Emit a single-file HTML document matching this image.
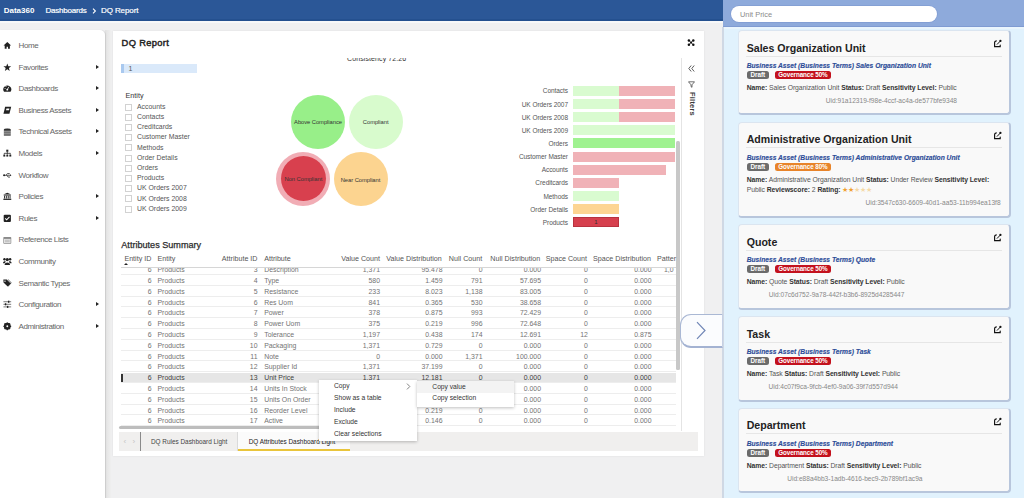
<!DOCTYPE html>
<html><head><meta charset="utf-8"><style>
*{box-sizing:border-box;margin:0;padding:0}
html,body{width:1024px;height:498px;overflow:hidden;background:#f0f0f1;font-family:"Liberation Sans",sans-serif;position:relative}
.a{position:absolute;white-space:nowrap}
.t{position:absolute;white-space:nowrap;height:12px;line-height:12px}
svg{display:block}
</style></head><body>
<div class="a" style="left:0px;top:0px;width:723px;height:21px;background:#2b5797;"></div>
<div class="a" style="left:0px;top:19px;width:723px;height:2px;background:#24508f;"></div>
<div class="a" style="left:0px;top:21px;width:723px;height:2px;background:#f7f8f9;"></div>
<div class="t" style="left:3.7px;top:5.20px;font-size:8px;color:#fff;font-weight:bold;font-style:normal;letter-spacing:0px;">Data360</div>
<div class="t" style="left:45.4px;top:5.20px;font-size:8px;color:#fff;font-weight:normal;font-style:normal;letter-spacing:-0.2px;-webkit-text-stroke:0.2px #fff">Dashboards</div>
<svg class="a" style="left:92px;top:7.6px" width="5" height="6" viewBox="0 0 5 6"><path d="M1 0.6 L3.4 3 L1 5.4" stroke="#fff" stroke-width="1.1" fill="none"/></svg>
<div class="t" style="left:101px;top:5.20px;font-size:8px;color:#fff;font-weight:normal;font-style:normal;letter-spacing:-0.1px;-webkit-text-stroke:0.2px #fff">DQ Report</div>
<div class="a" style="left:105px;top:30px;width:6px;height:468px;background:linear-gradient(to right,#e2e2e2,#efefef);"></div>
<div class="a" style="left:0px;top:30px;width:105px;height:468px;background:#fff;border-top-right-radius:5px;box-shadow:1px 0 1px rgba(0,0,0,.10)"></div>
<svg class="a" style="left:3.4px;top:41.2px" width="8.6" height="8.6" viewBox="0 0 10 10"><path d="M5 1.2 L0.6 5.2 H2 V9 H4.2 V6.6 H5.8 V9 H8 V5.2 H9.4 Z" fill="#222"/></svg>
<div class="t" style="left:18.5px;top:39.90px;font-size:8px;color:#666;font-weight:normal;font-style:normal;letter-spacing:-0.38px;">Home</div>
<svg class="a" style="left:3.4px;top:62.8px" width="8.6" height="8.6" viewBox="0 0 10 10"><path d="M5 0.6 L6.2 3.7 L9.5 3.8 L6.9 5.9 L7.8 9.2 L5 7.3 L2.2 9.2 L3.1 5.9 L0.5 3.8 L3.8 3.7 Z" fill="#222"/></svg>
<div class="t" style="left:18.5px;top:61.50px;font-size:8px;color:#666;font-weight:normal;font-style:normal;letter-spacing:-0.38px;">Favorites</div>
<div class="a" style="left:96px;top:64.6px;width:0;height:0;border-left:3px solid #222;border-top:2.5px solid transparent;border-bottom:2.5px solid transparent"></div>
<svg class="a" style="left:3.4px;top:84.4px" width="8.6" height="8.6" viewBox="0 0 10 10"><path d="M1.2 9 A4.6 4.6 0 1 1 8.8 9 Z" fill="#222"/><circle cx="5" cy="6.6" r="1.1" fill="#fff"/><path d="M5 6.6 L6.8 3.2" stroke="#fff" stroke-width="0.9"/><circle cx="2.4" cy="5.2" r="0.6" fill="#fff"/><circle cx="3.5" cy="3" r="0.6" fill="#fff"/></svg>
<div class="t" style="left:18.5px;top:83.10px;font-size:8px;color:#666;font-weight:normal;font-style:normal;letter-spacing:-0.38px;">Dashboards</div>
<div class="a" style="left:96px;top:86.2px;width:0;height:0;border-left:3px solid #222;border-top:2.5px solid transparent;border-bottom:2.5px solid transparent"></div>
<svg class="a" style="left:3.4px;top:106.0px" width="8.6" height="8.6" viewBox="0 0 10 10"><path d="M2.5 1 H9.5 L7.5 9 H0.5 Z" fill="#222"/><path d="M4 3 H7.5 L7 5 H3.5 Z" fill="#fff"/></svg>
<div class="t" style="left:18.5px;top:104.70px;font-size:8px;color:#666;font-weight:normal;font-style:normal;letter-spacing:-0.38px;">Business Assets</div>
<div class="a" style="left:96px;top:107.8px;width:0;height:0;border-left:3px solid #222;border-top:2.5px solid transparent;border-bottom:2.5px solid transparent"></div>
<svg class="a" style="left:3.4px;top:127.6px" width="8.6" height="8.6" viewBox="0 0 10 10"><ellipse cx="5" cy="2" rx="4" ry="1.4" fill="#222"/><rect x="1" y="2" width="8" height="7" fill="#555"/><path d="M1 4.5 H9 M1 6.8 H9" stroke="#fff" stroke-width="0.6"/></svg>
<div class="t" style="left:18.5px;top:126.30px;font-size:8px;color:#666;font-weight:normal;font-style:normal;letter-spacing:-0.38px;">Technical Assets</div>
<div class="a" style="left:96px;top:129.4px;width:0;height:0;border-left:3px solid #222;border-top:2.5px solid transparent;border-bottom:2.5px solid transparent"></div>
<svg class="a" style="left:3.4px;top:149.2px" width="8.6" height="8.6" viewBox="0 0 10 10"><rect x="3.8" y="0.8" width="2.4" height="2.4" fill="#222"/><path d="M5 3 V5 M1.5 5 H8.5 M1.5 5 V6.5 M5 5 V6.5 M8.5 5 V6.5" stroke="#222" stroke-width="0.9" fill="none"/><rect x="0.4" y="6.6" width="2.2" height="2.2" fill="#222"/><rect x="3.9" y="6.6" width="2.2" height="2.2" fill="#222"/><rect x="7.4" y="6.6" width="2.2" height="2.2" fill="#222"/></svg>
<div class="t" style="left:18.5px;top:147.90px;font-size:8px;color:#666;font-weight:normal;font-style:normal;letter-spacing:-0.38px;">Models</div>
<div class="a" style="left:96px;top:151.0px;width:0;height:0;border-left:3px solid #222;border-top:2.5px solid transparent;border-bottom:2.5px solid transparent"></div>
<svg class="a" style="left:3.4px;top:170.8px" width="8.6" height="8.6" viewBox="0 0 10 10"><circle cx="1.3" cy="5" r="1.2" fill="#222"/><path d="M1.5 5 H9 M3.5 5 L5 3 H6.5 M4.5 5 L5.8 7 H7" stroke="#222" stroke-width="0.8" fill="none"/><path d="M8.2 3.8 L9.8 5 L8.2 6.2 Z" fill="#222"/><rect x="6.3" y="2.4" width="1.3" height="1.3" fill="#222"/><circle cx="7.4" cy="7" r="0.7" fill="#222"/></svg>
<div class="t" style="left:18.5px;top:169.50px;font-size:8px;color:#666;font-weight:normal;font-style:normal;letter-spacing:-0.38px;">Workflow</div>
<svg class="a" style="left:3.4px;top:192.4px" width="8.6" height="8.6" viewBox="0 0 10 10"><path d="M5 0.8 L9.6 3 H0.4 Z" fill="#222"/><rect x="0.8" y="3.3" width="8.4" height="0.8" fill="#222"/><path d="M1.8 4.4 V7.6 M3.9 4.4 V7.6 M6.1 4.4 V7.6 M8.2 4.4 V7.6" stroke="#222" stroke-width="1.1"/><rect x="0.4" y="7.8" width="9.2" height="1.4" fill="#222"/></svg>
<div class="t" style="left:18.5px;top:191.10px;font-size:8px;color:#666;font-weight:normal;font-style:normal;letter-spacing:-0.38px;">Policies</div>
<div class="a" style="left:96px;top:194.2px;width:0;height:0;border-left:3px solid #222;border-top:2.5px solid transparent;border-bottom:2.5px solid transparent"></div>
<svg class="a" style="left:3.4px;top:214.0px" width="8.6" height="8.6" viewBox="0 0 10 10"><rect x="0.8" y="0.8" width="8.4" height="8.4" rx="1.2" fill="#222"/><path d="M2.6 5 L4.3 6.7 L7.5 3.3" stroke="#fff" stroke-width="1.2" fill="none"/></svg>
<div class="t" style="left:18.5px;top:212.70px;font-size:8px;color:#666;font-weight:normal;font-style:normal;letter-spacing:-0.38px;">Rules</div>
<div class="a" style="left:96px;top:215.8px;width:0;height:0;border-left:3px solid #222;border-top:2.5px solid transparent;border-bottom:2.5px solid transparent"></div>
<svg class="a" style="left:3.4px;top:235.6px" width="8.6" height="8.6" viewBox="0 0 10 10"><rect x="0.4" y="1.2" width="9.2" height="7.8" rx="0.8" fill="#8a8a8a"/><rect x="1.2" y="3.4" width="7.6" height="4.8" fill="#e8e8e8"/><path d="M2.2 4.9 H7.8 M2.2 6.7 H7.8" stroke="#999" stroke-width="0.7"/></svg>
<div class="t" style="left:18.5px;top:234.30px;font-size:8px;color:#666;font-weight:normal;font-style:normal;letter-spacing:-0.38px;">Reference Lists</div>
<svg class="a" style="left:3.4px;top:257.2px" width="8.6" height="8.6" viewBox="0 0 10 10"><circle cx="5" cy="3" r="1.9" fill="#222"/><path d="M1.8 9.2 C1.8 5.4 8.2 5.4 8.2 9.2 Z" fill="#222"/><circle cx="1.7" cy="2.6" r="1.4" fill="#222"/><circle cx="8.3" cy="2.6" r="1.4" fill="#222"/><path d="M0 7.4 C0 4.8 2.6 4.6 3.2 5.4 L2 7.4 Z M10 7.4 C10 4.8 7.4 4.6 6.8 5.4 L8 7.4 Z" fill="#222"/></svg>
<div class="t" style="left:18.5px;top:255.90px;font-size:8px;color:#666;font-weight:normal;font-style:normal;letter-spacing:-0.38px;">Community</div>
<svg class="a" style="left:3.4px;top:278.8px" width="8.6" height="8.6" viewBox="0 0 10 10"><path d="M0.4 0.6 H4.4 L9 5.2 L5.4 8.8 L0.6 4.2 Z" fill="#222"/><path d="M5.4 0.6 H6.2 L10 4.4 L6.2 8.6 L5.8 8.2 L9.2 4.4 Z" fill="#222"/><circle cx="2.3" cy="2.5" r="0.8" fill="#fff"/></svg>
<div class="t" style="left:18.5px;top:277.50px;font-size:8px;color:#666;font-weight:normal;font-style:normal;letter-spacing:-0.38px;">Semantic Types</div>
<svg class="a" style="left:3.4px;top:300.4px" width="8.6" height="8.6" viewBox="0 0 10 10"><path d="M0.5 2 H9.5 M0.5 5 H9.5 M0.5 8 H9.5" stroke="#222" stroke-width="0.7"/><rect x="5.8" y="0.8" width="1.6" height="2.4" fill="#222"/><rect x="2.2" y="3.8" width="1.6" height="2.4" fill="#222"/><rect x="4.6" y="6.8" width="1.6" height="2.4" fill="#222"/></svg>
<div class="t" style="left:18.5px;top:299.10px;font-size:8px;color:#666;font-weight:normal;font-style:normal;letter-spacing:-0.38px;">Configuration</div>
<div class="a" style="left:96px;top:302.2px;width:0;height:0;border-left:3px solid #222;border-top:2.5px solid transparent;border-bottom:2.5px solid transparent"></div>
<svg class="a" style="left:3.4px;top:322.0px" width="8.6" height="8.6" viewBox="0 0 10 10"><circle cx="5" cy="5" r="3" fill="none" stroke="#222" stroke-width="2"/><path d="M5 0.5 V9.5 M0.5 5 H9.5 M1.8 1.8 L8.2 8.2 M8.2 1.8 L1.8 8.2" stroke="#222" stroke-width="1.4"/><circle cx="5" cy="5" r="2.8" fill="#222"/><circle cx="5" cy="5" r="1.1" fill="#fff"/></svg>
<div class="t" style="left:18.5px;top:320.70px;font-size:8px;color:#666;font-weight:normal;font-style:normal;letter-spacing:-0.38px;">Administration</div>
<div class="a" style="left:96px;top:323.8px;width:0;height:0;border-left:3px solid #222;border-top:2.5px solid transparent;border-bottom:2.5px solid transparent"></div>
<div class="a" style="left:113px;top:30.5px;width:591px;height:425.5px;background:#fff;box-shadow:0 0 2px rgba(0,0,0,.08)"></div>
<div class="t" style="left:121.6px;top:36.90px;font-size:9.3px;color:#252423;font-weight:normal;font-style:normal;letter-spacing:0.35px;-webkit-text-stroke:0.45px #252423">DQ Report</div>
<svg class="a" style="left:686px;top:38px" width="10" height="10" viewBox="0 0 10 10"><path d="M3 2.5 L7 6.6 M7 2.5 L3 6.6" stroke="#111" stroke-width="0.8"/><circle cx="2.9" cy="2.4" r="1.25" fill="#111"/><circle cx="7.3" cy="2.4" r="1.25" fill="#111"/><circle cx="2.9" cy="6.7" r="1.25" fill="#111"/><circle cx="7.3" cy="6.7" r="1.25" fill="#111"/><circle cx="5.1" cy="4.5" r="1" fill="#111"/></svg>
<div class="a" style="left:121px;top:64.2px;width:76px;height:8.5px;background:#dae9fa;border-left:3px solid #a9c9ef"></div>
<div class="t" style="left:128.6px;top:63.20px;font-size:7px;color:#555;font-weight:normal;font-style:normal;letter-spacing:0px;">1</div>
<div class="a" style="left:340px;top:57.6px;width:80px;height:6px;overflow:hidden"><div class="t" style="left:7px;top:-4.9px;font-size:7px;color:#333;letter-spacing:0.1px">Consistency 72.26</div></div>
<div class="t" style="left:125.5px;top:89.80px;font-size:7.2px;color:#333;font-weight:normal;font-style:normal;letter-spacing:0px;">Entity</div>
<div class="a" style="left:125px;top:103.5px;width:7px;height:7px;background:#fff;border:1px solid #d2d2d2"></div>
<div class="t" style="left:137px;top:100.80px;font-size:6.9px;color:#555;font-weight:normal;font-style:normal;letter-spacing:0px;">Accounts</div>
<div class="a" style="left:125px;top:113.7px;width:7px;height:7px;background:#fff;border:1px solid #d2d2d2"></div>
<div class="t" style="left:137px;top:111.00px;font-size:6.9px;color:#555;font-weight:normal;font-style:normal;letter-spacing:0px;">Contacts</div>
<div class="a" style="left:125px;top:123.89999999999999px;width:7px;height:7px;background:#fff;border:1px solid #d2d2d2"></div>
<div class="t" style="left:137px;top:121.20px;font-size:6.9px;color:#555;font-weight:normal;font-style:normal;letter-spacing:0px;">Creditcards</div>
<div class="a" style="left:125px;top:134.1px;width:7px;height:7px;background:#fff;border:1px solid #d2d2d2"></div>
<div class="t" style="left:137px;top:131.40px;font-size:6.9px;color:#555;font-weight:normal;font-style:normal;letter-spacing:0px;">Customer Master</div>
<div class="a" style="left:125px;top:144.29999999999998px;width:7px;height:7px;background:#fff;border:1px solid #d2d2d2"></div>
<div class="t" style="left:137px;top:141.60px;font-size:6.9px;color:#555;font-weight:normal;font-style:normal;letter-spacing:0px;">Methods</div>
<div class="a" style="left:125px;top:154.5px;width:7px;height:7px;background:#fff;border:1px solid #d2d2d2"></div>
<div class="t" style="left:137px;top:151.80px;font-size:6.9px;color:#555;font-weight:normal;font-style:normal;letter-spacing:0px;">Order Details</div>
<div class="a" style="left:125px;top:164.7px;width:7px;height:7px;background:#fff;border:1px solid #d2d2d2"></div>
<div class="t" style="left:137px;top:162.00px;font-size:6.9px;color:#555;font-weight:normal;font-style:normal;letter-spacing:0px;">Orders</div>
<div class="a" style="left:125px;top:174.89999999999998px;width:7px;height:7px;background:#fff;border:1px solid #d2d2d2"></div>
<div class="t" style="left:137px;top:172.20px;font-size:6.9px;color:#555;font-weight:normal;font-style:normal;letter-spacing:0px;">Products</div>
<div class="a" style="left:125px;top:185.09999999999997px;width:7px;height:7px;background:#fff;border:1px solid #d2d2d2"></div>
<div class="t" style="left:137px;top:182.40px;font-size:6.9px;color:#555;font-weight:normal;font-style:normal;letter-spacing:0px;">UK Orders 2007</div>
<div class="a" style="left:125px;top:195.29999999999998px;width:7px;height:7px;background:#fff;border:1px solid #d2d2d2"></div>
<div class="t" style="left:137px;top:192.60px;font-size:6.9px;color:#555;font-weight:normal;font-style:normal;letter-spacing:0px;">UK Orders 2008</div>
<div class="a" style="left:125px;top:205.5px;width:7px;height:7px;background:#fff;border:1px solid #d2d2d2"></div>
<div class="t" style="left:137px;top:202.80px;font-size:6.9px;color:#555;font-weight:normal;font-style:normal;letter-spacing:0px;">UK Orders 2009</div>
<div class="a" style="left:291px;top:94.7px;width:54px;height:54px;border-radius:50%;background:#98ef89"></div>
<div class="t" style="left:218px;width:200px;text-align:center;top:116.20px;font-size:5.8px;color:#333;font-weight:normal;font-style:normal;letter-spacing:-0.05px;">Above Compliance</div>
<div class="a" style="left:348.7px;top:94.7px;width:54px;height:54px;border-radius:50%;background:#d8fbcd"></div>
<div class="t" style="left:275.7px;width:200px;text-align:center;top:116.20px;font-size:5.8px;color:#333;font-weight:normal;font-style:normal;letter-spacing:-0.05px;">Compliant</div>
<div class="a" style="left:276.4px;top:151.8px;width:54px;height:54px;border-radius:50%;background:#f1adb5"></div>
<div class="a" style="left:280.9px;top:156.3px;width:45.0px;height:45.0px;border-radius:50%;background:#d8404e"></div>
<div class="t" style="left:203.39999999999998px;width:200px;text-align:center;top:173.30px;font-size:5.8px;color:#333;font-weight:normal;font-style:normal;letter-spacing:-0.05px;">Non Compliant</div>
<div class="a" style="left:333.5px;top:152px;width:54px;height:54px;border-radius:50%;background:#fcd490"></div>
<div class="t" style="left:260.5px;width:200px;text-align:center;top:173.50px;font-size:5.8px;color:#333;font-weight:normal;font-style:normal;letter-spacing:-0.05px;">Near Compliant</div>
<div class="t" style="right:456px;top:85.40px;font-size:6.5px;color:#555;font-weight:normal;font-style:normal;letter-spacing:-0.05px;">Contacts</div>
<div class="a" style="left:572.7px;top:85.8px;width:46.3px;height:10px;background:#d9fbd0;"></div>
<div class="a" style="left:619.0px;top:85.8px;width:56px;height:10px;background:#f0b2b7;"></div>
<div class="t" style="right:456px;top:98.55px;font-size:6.5px;color:#555;font-weight:normal;font-style:normal;letter-spacing:-0.05px;">UK Orders 2007</div>
<div class="a" style="left:572.7px;top:99.0px;width:46.3px;height:10px;background:#d9fbd0;"></div>
<div class="a" style="left:619.0px;top:99.0px;width:56px;height:10px;background:#f0b2b7;"></div>
<div class="t" style="right:456px;top:111.70px;font-size:6.5px;color:#555;font-weight:normal;font-style:normal;letter-spacing:-0.05px;">UK Orders 2008</div>
<div class="a" style="left:572.7px;top:112.1px;width:46.3px;height:10px;background:#d9fbd0;"></div>
<div class="a" style="left:619.0px;top:112.1px;width:56px;height:10px;background:#f0b2b7;"></div>
<div class="t" style="right:456px;top:124.85px;font-size:6.5px;color:#555;font-weight:normal;font-style:normal;letter-spacing:-0.05px;">UK Orders 2009</div>
<div class="a" style="left:572.7px;top:125.2px;width:102.3px;height:10px;background:#d9fbd0;"></div>
<div class="t" style="right:456px;top:138.00px;font-size:6.5px;color:#555;font-weight:normal;font-style:normal;letter-spacing:-0.05px;">Orders</div>
<div class="a" style="left:572.7px;top:138.4px;width:102.3px;height:10px;background:#9ff290;"></div>
<div class="t" style="right:456px;top:151.15px;font-size:6.5px;color:#555;font-weight:normal;font-style:normal;letter-spacing:-0.05px;">Customer Master</div>
<div class="a" style="left:572.7px;top:151.6px;width:102.3px;height:10px;background:#f0b2b7;"></div>
<div class="t" style="right:456px;top:164.30px;font-size:6.5px;color:#555;font-weight:normal;font-style:normal;letter-spacing:-0.05px;">Accounts</div>
<div class="a" style="left:572.7px;top:164.7px;width:93px;height:10px;background:#f0b2b7;"></div>
<div class="t" style="right:456px;top:177.45px;font-size:6.5px;color:#555;font-weight:normal;font-style:normal;letter-spacing:-0.05px;">Creditcards</div>
<div class="a" style="left:572.7px;top:177.8px;width:46.3px;height:10px;background:#f0b2b7;"></div>
<div class="t" style="right:456px;top:190.60px;font-size:6.5px;color:#555;font-weight:normal;font-style:normal;letter-spacing:-0.05px;">Methods</div>
<div class="a" style="left:572.7px;top:191.0px;width:46.3px;height:10px;background:#d9fbd0;"></div>
<div class="t" style="right:456px;top:203.75px;font-size:6.5px;color:#555;font-weight:normal;font-style:normal;letter-spacing:-0.05px;">Order Details</div>
<div class="a" style="left:572.7px;top:204.2px;width:46.3px;height:10px;background:#fdd593;"></div>
<div class="t" style="right:456px;top:216.90px;font-size:6.5px;color:#555;font-weight:normal;font-style:normal;letter-spacing:-0.05px;">Products</div>
<div class="a" style="left:572.7px;top:217.3px;width:46.3px;height:10px;background:#d6404e;border:1px solid #b8323f"></div>
<div class="t" style="left:496px;width:200px;text-align:center;top:215.70px;font-size:6px;color:#333;font-weight:normal;font-style:normal;letter-spacing:0px;">1</div>
<div class="a" style="left:681px;top:58px;width:1px;height:373px;background:#e4e4e4;"></div>
<div class="a" style="left:676.3px;top:140.5px;width:3.5px;height:229px;background:#c8c8c8;border-radius:1.5px"></div>
<svg class="a" style="left:688px;top:65px" width="7" height="7" viewBox="0 0 7 7"><path d="M3.2 0.5 L0.8 3.5 L3.2 6.5 M6.2 0.5 L3.8 3.5 L6.2 6.5" stroke="#333" stroke-width="0.8" fill="none"/></svg>
<svg class="a" style="left:688px;top:81px" width="7" height="7" viewBox="0 0 7 7"><path d="M0.5 0.8 H6.5 L4 3.8 V6.3 L3 5.6 V3.8 Z" stroke="#333" stroke-width="0.7" fill="none"/></svg>
<div class="t" style="left:680px;top:97.8px;width:24px;text-align:center;font-size:7.5px;font-weight:bold;color:#3a3a3a;transform:rotate(90deg);letter-spacing:0.2px">Filters</div>
<div class="t" style="left:121.3px;top:239.40px;font-size:9.1px;color:#2b2b2b;font-weight:normal;font-style:normal;letter-spacing:0px;-webkit-text-stroke:0.25px #2b2b2b">Attributes Summary</div>
<div class="t" style="left:124.4px;top:252.90px;font-size:7.15px;color:#555;font-weight:normal;font-style:normal;letter-spacing:0px;">Entity ID</div>
<div class="t" style="left:157.5px;top:252.90px;font-size:7.15px;color:#555;font-weight:normal;font-style:normal;letter-spacing:0px;">Entity</div>
<div class="t" style="right:766.5px;top:252.90px;font-size:7.15px;color:#555;font-weight:normal;font-style:normal;letter-spacing:0px;">Attribute ID</div>
<div class="t" style="left:264.2px;top:252.90px;font-size:7.15px;color:#555;font-weight:normal;font-style:normal;letter-spacing:0px;">Attribute</div>
<div class="t" style="right:644px;top:252.90px;font-size:7.15px;color:#555;font-weight:normal;font-style:normal;letter-spacing:0px;">Value Count</div>
<div class="t" style="right:582.3px;top:252.90px;font-size:7.15px;color:#555;font-weight:normal;font-style:normal;letter-spacing:0px;">Value Distribution</div>
<div class="t" style="right:541.8px;top:252.90px;font-size:7.15px;color:#555;font-weight:normal;font-style:normal;letter-spacing:0px;">Null Count</div>
<div class="t" style="right:483.70000000000005px;top:252.90px;font-size:7.15px;color:#555;font-weight:normal;font-style:normal;letter-spacing:0px;">Null Distribution</div>
<div class="t" style="right:437px;top:252.90px;font-size:7.15px;color:#555;font-weight:normal;font-style:normal;letter-spacing:0px;">Space Count</div>
<div class="t" style="right:373px;top:252.90px;font-size:7.15px;color:#555;font-weight:normal;font-style:normal;letter-spacing:0px;">Space Distribution</div>
<div class="t" style="left:657px;top:252.90px;font-size:7.15px;color:#555;font-weight:normal;font-style:normal;letter-spacing:0px;">Patter</div>
<div class="a" style="left:124.3px;top:263px;width:0;height:0;border-bottom:2.2px solid #222;border-left:2.4px solid transparent;border-right:2.4px solid transparent"></div>
<div class="a" style="left:113px;top:267px;width:563px;height:159px;overflow:hidden">
<div class="a" style="left:8px;top:6.9px;width:555px;height:1px;background:#ededed;"></div>
<div class="t" style="right:524.3px;top:-2.90px;font-size:6.9px;color:#737373">6</div>
<div class="t" style="left:44.5px;top:-2.90px;font-size:6.9px;color:#737373">Products</div>
<div class="t" style="right:418.5px;top:-2.90px;font-size:6.9px;color:#737373">3</div>
<div class="t" style="left:151.2px;top:-2.90px;font-size:6.9px;color:#737373">Description</div>
<div class="t" style="right:296.0px;top:-2.90px;font-size:6.9px;color:#737373">1,371</div>
<div class="t" style="right:233.5px;top:-2.90px;font-size:6.9px;color:#737373">95.478</div>
<div class="t" style="right:193.5px;top:-2.90px;font-size:6.9px;color:#737373">0</div>
<div class="t" style="right:135.0px;top:-2.90px;font-size:6.9px;color:#737373">0.000</div>
<div class="t" style="right:88.2px;top:-2.90px;font-size:6.9px;color:#737373">0</div>
<div class="t" style="right:24.5px;top:-2.90px;font-size:6.9px;color:#737373">0.000</div>
<div class="t" style="left:551.0px;top:-2.90px;font-size:6.9px;color:#737373">1,0</div>
<div class="a" style="left:8px;top:17.7px;width:555px;height:1px;background:#ededed;"></div>
<div class="t" style="right:524.3px;top:7.90px;font-size:6.9px;color:#737373">6</div>
<div class="t" style="left:44.5px;top:7.90px;font-size:6.9px;color:#737373">Products</div>
<div class="t" style="right:418.5px;top:7.90px;font-size:6.9px;color:#737373">4</div>
<div class="t" style="left:151.2px;top:7.90px;font-size:6.9px;color:#737373">Type</div>
<div class="t" style="right:296.0px;top:7.90px;font-size:6.9px;color:#737373">580</div>
<div class="t" style="right:233.5px;top:7.90px;font-size:6.9px;color:#737373">1.459</div>
<div class="t" style="right:193.5px;top:7.90px;font-size:6.9px;color:#737373">791</div>
<div class="t" style="right:135.0px;top:7.90px;font-size:6.9px;color:#737373">57.695</div>
<div class="t" style="right:88.2px;top:7.90px;font-size:6.9px;color:#737373">0</div>
<div class="t" style="right:24.5px;top:7.90px;font-size:6.9px;color:#737373">0.000</div>
<div class="a" style="left:8px;top:28.5px;width:555px;height:1px;background:#ededed;"></div>
<div class="t" style="right:524.3px;top:18.70px;font-size:6.9px;color:#737373">6</div>
<div class="t" style="left:44.5px;top:18.70px;font-size:6.9px;color:#737373">Products</div>
<div class="t" style="right:418.5px;top:18.70px;font-size:6.9px;color:#737373">5</div>
<div class="t" style="left:151.2px;top:18.70px;font-size:6.9px;color:#737373">Resistance</div>
<div class="t" style="right:296.0px;top:18.70px;font-size:6.9px;color:#737373">233</div>
<div class="t" style="right:233.5px;top:18.70px;font-size:6.9px;color:#737373">8.023</div>
<div class="t" style="right:193.5px;top:18.70px;font-size:6.9px;color:#737373">1,138</div>
<div class="t" style="right:135.0px;top:18.70px;font-size:6.9px;color:#737373">83.005</div>
<div class="t" style="right:88.2px;top:18.70px;font-size:6.9px;color:#737373">0</div>
<div class="t" style="right:24.5px;top:18.70px;font-size:6.9px;color:#737373">0.000</div>
<div class="a" style="left:8px;top:39.3px;width:555px;height:1px;background:#ededed;"></div>
<div class="t" style="right:524.3px;top:29.50px;font-size:6.9px;color:#737373">6</div>
<div class="t" style="left:44.5px;top:29.50px;font-size:6.9px;color:#737373">Products</div>
<div class="t" style="right:418.5px;top:29.50px;font-size:6.9px;color:#737373">6</div>
<div class="t" style="left:151.2px;top:29.50px;font-size:6.9px;color:#737373">Res Uom</div>
<div class="t" style="right:296.0px;top:29.50px;font-size:6.9px;color:#737373">841</div>
<div class="t" style="right:233.5px;top:29.50px;font-size:6.9px;color:#737373">0.365</div>
<div class="t" style="right:193.5px;top:29.50px;font-size:6.9px;color:#737373">530</div>
<div class="t" style="right:135.0px;top:29.50px;font-size:6.9px;color:#737373">38.658</div>
<div class="t" style="right:88.2px;top:29.50px;font-size:6.9px;color:#737373">0</div>
<div class="t" style="right:24.5px;top:29.50px;font-size:6.9px;color:#737373">0.000</div>
<div class="a" style="left:8px;top:50.1px;width:555px;height:1px;background:#ededed;"></div>
<div class="t" style="right:524.3px;top:40.30px;font-size:6.9px;color:#737373">6</div>
<div class="t" style="left:44.5px;top:40.30px;font-size:6.9px;color:#737373">Products</div>
<div class="t" style="right:418.5px;top:40.30px;font-size:6.9px;color:#737373">7</div>
<div class="t" style="left:151.2px;top:40.30px;font-size:6.9px;color:#737373">Power</div>
<div class="t" style="right:296.0px;top:40.30px;font-size:6.9px;color:#737373">378</div>
<div class="t" style="right:233.5px;top:40.30px;font-size:6.9px;color:#737373">0.875</div>
<div class="t" style="right:193.5px;top:40.30px;font-size:6.9px;color:#737373">993</div>
<div class="t" style="right:135.0px;top:40.30px;font-size:6.9px;color:#737373">72.429</div>
<div class="t" style="right:88.2px;top:40.30px;font-size:6.9px;color:#737373">0</div>
<div class="t" style="right:24.5px;top:40.30px;font-size:6.9px;color:#737373">0.000</div>
<div class="a" style="left:8px;top:60.9px;width:555px;height:1px;background:#ededed;"></div>
<div class="t" style="right:524.3px;top:51.10px;font-size:6.9px;color:#737373">6</div>
<div class="t" style="left:44.5px;top:51.10px;font-size:6.9px;color:#737373">Products</div>
<div class="t" style="right:418.5px;top:51.10px;font-size:6.9px;color:#737373">8</div>
<div class="t" style="left:151.2px;top:51.10px;font-size:6.9px;color:#737373">Power Uom</div>
<div class="t" style="right:296.0px;top:51.10px;font-size:6.9px;color:#737373">375</div>
<div class="t" style="right:233.5px;top:51.10px;font-size:6.9px;color:#737373">0.219</div>
<div class="t" style="right:193.5px;top:51.10px;font-size:6.9px;color:#737373">996</div>
<div class="t" style="right:135.0px;top:51.10px;font-size:6.9px;color:#737373">72.648</div>
<div class="t" style="right:88.2px;top:51.10px;font-size:6.9px;color:#737373">0</div>
<div class="t" style="right:24.5px;top:51.10px;font-size:6.9px;color:#737373">0.000</div>
<div class="a" style="left:8px;top:71.7px;width:555px;height:1px;background:#ededed;"></div>
<div class="t" style="right:524.3px;top:61.90px;font-size:6.9px;color:#737373">6</div>
<div class="t" style="left:44.5px;top:61.90px;font-size:6.9px;color:#737373">Products</div>
<div class="t" style="right:418.5px;top:61.90px;font-size:6.9px;color:#737373">9</div>
<div class="t" style="left:151.2px;top:61.90px;font-size:6.9px;color:#737373">Tolerance</div>
<div class="t" style="right:296.0px;top:61.90px;font-size:6.9px;color:#737373">1,197</div>
<div class="t" style="right:233.5px;top:61.90px;font-size:6.9px;color:#737373">0.438</div>
<div class="t" style="right:193.5px;top:61.90px;font-size:6.9px;color:#737373">174</div>
<div class="t" style="right:135.0px;top:61.90px;font-size:6.9px;color:#737373">12.691</div>
<div class="t" style="right:88.2px;top:61.90px;font-size:6.9px;color:#737373">12</div>
<div class="t" style="right:24.5px;top:61.90px;font-size:6.9px;color:#737373">0.875</div>
<div class="a" style="left:8px;top:82.5px;width:555px;height:1px;background:#ededed;"></div>
<div class="t" style="right:524.3px;top:72.70px;font-size:6.9px;color:#737373">6</div>
<div class="t" style="left:44.5px;top:72.70px;font-size:6.9px;color:#737373">Products</div>
<div class="t" style="right:418.5px;top:72.70px;font-size:6.9px;color:#737373">10</div>
<div class="t" style="left:151.2px;top:72.70px;font-size:6.9px;color:#737373">Packaging</div>
<div class="t" style="right:296.0px;top:72.70px;font-size:6.9px;color:#737373">1,371</div>
<div class="t" style="right:233.5px;top:72.70px;font-size:6.9px;color:#737373">0.729</div>
<div class="t" style="right:193.5px;top:72.70px;font-size:6.9px;color:#737373">0</div>
<div class="t" style="right:135.0px;top:72.70px;font-size:6.9px;color:#737373">0.000</div>
<div class="t" style="right:88.2px;top:72.70px;font-size:6.9px;color:#737373">0</div>
<div class="t" style="right:24.5px;top:72.70px;font-size:6.9px;color:#737373">0.000</div>
<div class="a" style="left:8px;top:93.3px;width:555px;height:1px;background:#ededed;"></div>
<div class="t" style="right:524.3px;top:83.50px;font-size:6.9px;color:#737373">6</div>
<div class="t" style="left:44.5px;top:83.50px;font-size:6.9px;color:#737373">Products</div>
<div class="t" style="right:418.5px;top:83.50px;font-size:6.9px;color:#737373">11</div>
<div class="t" style="left:151.2px;top:83.50px;font-size:6.9px;color:#737373">Note</div>
<div class="t" style="right:296.0px;top:83.50px;font-size:6.9px;color:#737373">0</div>
<div class="t" style="right:233.5px;top:83.50px;font-size:6.9px;color:#737373">0.000</div>
<div class="t" style="right:193.5px;top:83.50px;font-size:6.9px;color:#737373">1,371</div>
<div class="t" style="right:135.0px;top:83.50px;font-size:6.9px;color:#737373">100.000</div>
<div class="t" style="right:88.2px;top:83.50px;font-size:6.9px;color:#737373">0</div>
<div class="t" style="right:24.5px;top:83.50px;font-size:6.9px;color:#737373">0.000</div>
<div class="a" style="left:8px;top:104.1px;width:555px;height:1px;background:#ededed;"></div>
<div class="t" style="right:524.3px;top:94.30px;font-size:6.9px;color:#737373">6</div>
<div class="t" style="left:44.5px;top:94.30px;font-size:6.9px;color:#737373">Products</div>
<div class="t" style="right:418.5px;top:94.30px;font-size:6.9px;color:#737373">12</div>
<div class="t" style="left:151.2px;top:94.30px;font-size:6.9px;color:#737373">Supplier Id</div>
<div class="t" style="right:296.0px;top:94.30px;font-size:6.9px;color:#737373">1,371</div>
<div class="t" style="right:233.5px;top:94.30px;font-size:6.9px;color:#737373">37.199</div>
<div class="t" style="right:193.5px;top:94.30px;font-size:6.9px;color:#737373">0</div>
<div class="t" style="right:135.0px;top:94.30px;font-size:6.9px;color:#737373">0.000</div>
<div class="t" style="right:88.2px;top:94.30px;font-size:6.9px;color:#737373">0</div>
<div class="t" style="right:24.5px;top:94.30px;font-size:6.9px;color:#737373">0.000</div>
<div class="a" style="left:8px;top:105.7px;width:555px;height:10.4px;background:#e6e6e6;"></div>
<div class="a" style="left:8px;top:106.6px;width:1.5px;height:9px;background:#333;"></div>
<div class="a" style="left:8px;top:114.9px;width:555px;height:1px;background:#ededed;"></div>
<div class="t" style="right:524.3px;top:105.10px;font-size:6.9px;color:#404040">6</div>
<div class="t" style="left:44.5px;top:105.10px;font-size:6.9px;color:#404040">Products</div>
<div class="t" style="right:418.5px;top:105.10px;font-size:6.9px;color:#404040">13</div>
<div class="t" style="left:151.2px;top:105.10px;font-size:6.9px;color:#404040">Unit Price</div>
<div class="t" style="right:296.0px;top:105.10px;font-size:6.9px;color:#404040">1,371</div>
<div class="t" style="right:233.5px;top:105.10px;font-size:6.9px;color:#404040">12.181</div>
<div class="t" style="right:193.5px;top:105.10px;font-size:6.9px;color:#404040">0</div>
<div class="t" style="right:135.0px;top:105.10px;font-size:6.9px;color:#404040">0.000</div>
<div class="t" style="right:88.2px;top:105.10px;font-size:6.9px;color:#404040">0</div>
<div class="t" style="right:24.5px;top:105.10px;font-size:6.9px;color:#404040">0.000</div>
<div class="a" style="left:8px;top:125.7px;width:555px;height:1px;background:#ededed;"></div>
<div class="t" style="right:524.3px;top:115.90px;font-size:6.9px;color:#737373">6</div>
<div class="t" style="left:44.5px;top:115.90px;font-size:6.9px;color:#737373">Products</div>
<div class="t" style="right:418.5px;top:115.90px;font-size:6.9px;color:#737373">14</div>
<div class="t" style="left:151.2px;top:115.90px;font-size:6.9px;color:#737373">Units In Stock</div>
<div class="t" style="right:296.0px;top:115.90px;font-size:6.9px;color:#737373">1,371</div>
<div class="t" style="right:233.5px;top:115.90px;font-size:6.9px;color:#737373">0.000</div>
<div class="t" style="right:193.5px;top:115.90px;font-size:6.9px;color:#737373">0</div>
<div class="t" style="right:135.0px;top:115.90px;font-size:6.9px;color:#737373">0.000</div>
<div class="t" style="right:88.2px;top:115.90px;font-size:6.9px;color:#737373">0</div>
<div class="t" style="right:24.5px;top:115.90px;font-size:6.9px;color:#737373">0.000</div>
<div class="a" style="left:8px;top:136.5px;width:555px;height:1px;background:#ededed;"></div>
<div class="t" style="right:524.3px;top:126.70px;font-size:6.9px;color:#737373">6</div>
<div class="t" style="left:44.5px;top:126.70px;font-size:6.9px;color:#737373">Products</div>
<div class="t" style="right:418.5px;top:126.70px;font-size:6.9px;color:#737373">15</div>
<div class="t" style="left:151.2px;top:126.70px;font-size:6.9px;color:#737373">Units On Order</div>
<div class="t" style="right:296.0px;top:126.70px;font-size:6.9px;color:#737373">1,371</div>
<div class="t" style="right:233.5px;top:126.70px;font-size:6.9px;color:#737373">0.000</div>
<div class="t" style="right:193.5px;top:126.70px;font-size:6.9px;color:#737373">0</div>
<div class="t" style="right:135.0px;top:126.70px;font-size:6.9px;color:#737373">0.000</div>
<div class="t" style="right:88.2px;top:126.70px;font-size:6.9px;color:#737373">0</div>
<div class="t" style="right:24.5px;top:126.70px;font-size:6.9px;color:#737373">0.000</div>
<div class="a" style="left:8px;top:147.3px;width:555px;height:1px;background:#ededed;"></div>
<div class="t" style="right:524.3px;top:137.50px;font-size:6.9px;color:#737373">6</div>
<div class="t" style="left:44.5px;top:137.50px;font-size:6.9px;color:#737373">Products</div>
<div class="t" style="right:418.5px;top:137.50px;font-size:6.9px;color:#737373">16</div>
<div class="t" style="left:151.2px;top:137.50px;font-size:6.9px;color:#737373">Reorder Level</div>
<div class="t" style="right:296.0px;top:137.50px;font-size:6.9px;color:#737373">1,371</div>
<div class="t" style="right:233.5px;top:137.50px;font-size:6.9px;color:#737373">0.219</div>
<div class="t" style="right:193.5px;top:137.50px;font-size:6.9px;color:#737373">0</div>
<div class="t" style="right:135.0px;top:137.50px;font-size:6.9px;color:#737373">0.000</div>
<div class="t" style="right:88.2px;top:137.50px;font-size:6.9px;color:#737373">0</div>
<div class="t" style="right:24.5px;top:137.50px;font-size:6.9px;color:#737373">0.000</div>
<div class="a" style="left:8px;top:158.1px;width:555px;height:1px;background:#ededed;"></div>
<div class="t" style="right:524.3px;top:148.30px;font-size:6.9px;color:#737373">6</div>
<div class="t" style="left:44.5px;top:148.30px;font-size:6.9px;color:#737373">Products</div>
<div class="t" style="right:418.5px;top:148.30px;font-size:6.9px;color:#737373">17</div>
<div class="t" style="left:151.2px;top:148.30px;font-size:6.9px;color:#737373">Active</div>
<div class="t" style="right:296.0px;top:148.30px;font-size:6.9px;color:#737373">1,371</div>
<div class="t" style="right:233.5px;top:148.30px;font-size:6.9px;color:#737373">0.146</div>
<div class="t" style="right:193.5px;top:148.30px;font-size:6.9px;color:#737373">0</div>
<div class="t" style="right:135.0px;top:148.30px;font-size:6.9px;color:#737373">0.000</div>
<div class="t" style="right:88.2px;top:148.30px;font-size:6.9px;color:#737373">0</div>
<div class="t" style="right:24.5px;top:148.30px;font-size:6.9px;color:#737373">0.000</div>
</div>
<div class="a" style="left:121px;top:266.9px;width:555px;height:0.8px;background:#d6d6d6;"></div>
<div class="a" style="left:119px;top:426.2px;width:215px;height:3.3px;background:#bdbdbd;border-radius:1.6px"></div>
<div class="a" style="left:119px;top:431.6px;width:579px;height:19px;background:#f0efee;"></div>
<div class="t" style="left:123.5px;top:436.20px;font-size:8px;color:#c4c4c4;font-weight:normal;font-style:normal;letter-spacing:0px;">‹</div>
<div class="t" style="left:132.5px;top:436.20px;font-size:8px;color:#c4c4c4;font-weight:normal;font-style:normal;letter-spacing:0px;">›</div>
<div class="a" style="left:139.5px;top:432px;width:1px;height:18.5px;background:#8a8a8a;"></div>
<div class="t" style="left:151px;top:436.30px;font-size:6.4px;color:#444;font-weight:normal;font-style:normal;letter-spacing:0px;">DQ Rules Dashboard Light</div>
<div class="a" style="left:237px;top:432px;width:1px;height:18.5px;background:#dadada;"></div>
<div class="a" style="left:238px;top:431.6px;width:112px;height:19px;background:#fbfbfb;"></div>
<div class="t" style="left:248.7px;top:436.30px;font-size:6.4px;color:#222;font-weight:normal;font-style:normal;letter-spacing:0px;">DQ Attributes Dashboard Light</div>
<div class="a" style="left:237.5px;top:448.6px;width:112.5px;height:2.2px;background:#e9c53c;"></div>
<div class="a" style="left:319px;top:380px;width:98px;height:61px;background:#fff;box-shadow:0 1px 3px rgba(0,0,0,.25)"></div>
<div class="t" style="left:334px;top:379.90px;font-size:6.7px;color:#333;font-weight:normal;font-style:normal;letter-spacing:0px;">Copy</div>
<div class="t" style="left:334px;top:391.80px;font-size:6.7px;color:#333;font-weight:normal;font-style:normal;letter-spacing:0px;">Show as a table</div>
<div class="t" style="left:334px;top:403.70px;font-size:6.7px;color:#333;font-weight:normal;font-style:normal;letter-spacing:0px;">Include</div>
<div class="t" style="left:334px;top:415.60px;font-size:6.7px;color:#333;font-weight:normal;font-style:normal;letter-spacing:0px;">Exclude</div>
<div class="t" style="left:334px;top:427.50px;font-size:6.7px;color:#333;font-weight:normal;font-style:normal;letter-spacing:0px;">Clear selections</div>
<svg class="a" style="left:405.5px;top:383px" width="5" height="7" viewBox="0 0 5 7"><path d="M1 0.6 L3.8 3.5 L1 6.4" stroke="#666" stroke-width="0.8" fill="none"/></svg>
<div class="a" style="left:417px;top:381px;width:97px;height:25.5px;background:#fff;box-shadow:0 1px 3px rgba(0,0,0,.25)"></div>
<div class="a" style="left:417px;top:381px;width:97px;height:12px;background:#f3f3f3;"></div>
<div class="t" style="left:432.3px;top:380.50px;font-size:6.7px;color:#333;font-weight:normal;font-style:normal;letter-spacing:0px;">Copy value</div>
<div class="t" style="left:432.3px;top:392.40px;font-size:6.7px;color:#333;font-weight:normal;font-style:normal;letter-spacing:0px;">Copy selection</div>
<div class="a" style="left:723px;top:0px;width:301px;height:498px;background:#e1f2fd;"></div>
<div class="a" style="left:723px;top:0px;width:301px;height:27px;background:#8eaadb;"></div>
<div class="a" style="left:723px;top:26px;width:301px;height:1px;background:#7f9bd2;"></div>
<div class="a" style="left:723px;top:27px;width:301px;height:1.5px;background:#eaf5fd;"></div>
<div class="a" style="left:722px;top:27px;width:2px;height:471px;background:#cfd8e4;"></div>
<div class="a" style="left:731px;top:5.6px;width:206px;height:16.4px;background:#fff;border-radius:8.2px;box-shadow:0 0 0 0.7px #809cd2"></div>
<div class="t" style="left:740px;top:8.90px;font-size:7.4px;color:#8a8a8a;font-weight:normal;font-style:normal;letter-spacing:0px;">Unit Price</div>
<div class="a" style="left:679.5px;top:313.5px;width:43.5px;height:34px;background:#fbfcfe;border:1.2px solid #aab8d4;border-bottom:2px solid #a3b2d2;border-right:1px solid #c5d0e4;border-radius:11px 0 0 11px"></div>
<svg class="a" style="left:695px;top:321px" width="12" height="19" viewBox="0 0 12 19"><path d="M2 1.2 L10 9.5 L2 17.8" stroke="#7086b6" stroke-width="1.2" fill="none"/></svg>
<div class="a" style="left:737.5px;top:30px;width:273px;height:85.3px;background:#f9f9f9;border-radius:4px;border:1px solid #dbe5f0;border-right:2px solid #b8c6dc;border-bottom:2px solid #b8c6dc"></div>
<div class="t" style="left:746.7px;top:41.80px;font-size:10.6px;color:#222;font-weight:bold;font-style:normal;letter-spacing:0px;">Sales Organization Unit</div>
<svg class="a" style="left:992.5px;top:39px" width="9" height="9" viewBox="0 0 9 9"><path d="M3.3 1.9 Q1.6 2.3 1.6 3.5 V7.6 H7.2 V6" stroke="#111" stroke-width="1.15" fill="none" stroke-linecap="round"/><path d="M3.9 5.6 L7.2 2.2" stroke="#111" stroke-width="1"/><circle cx="7.4" cy="1.9" r="1.15" fill="#111"/></svg>
<div class="a" style="left:746px;top:55.9px;width:256px;height:1px;background:#e6e6e6;"></div>
<div class="t" style="left:746.7px;top:60.00px;font-size:6.7px;color:#2c4c98;font-weight:bold;font-style:italic;letter-spacing:0px;-webkit-text-stroke:0.15px #2c4c98">Business Asset (Business Terms) Sales Organization Unit</div>
<div class="a" style="left:746.7px;top:71.1px;width:22.2px;height:8.2px;background:#6b6b6b;border-radius:2.5px;color:#fff;font-size:6.3px;font-weight:bold;line-height:8.2px;text-align:center">Draft</div>
<div class="a" style="left:775.1px;top:71.1px;width:55.7px;height:8.2px;background:#c3111d;border-radius:2.5px;color:#fff;font-size:6.3px;font-weight:bold;line-height:8.2px;text-align:center;letter-spacing:-0.1px">Governance 50%</div>
<div class="t" style="left:746.7px;top:82.00px;font-size:6.8px;color:#555;font-weight:normal;font-style:normal;letter-spacing:-0.05px;"><b style="color:#333">Name:</b> Sales Organization Unit <b style="color:#333">Status:</b> Draft <b style="color:#333">Sensitivity Level:</b> Public</div>
<div class="t" style="right:67px;top:95.30px;font-size:6.6px;color:#888;font-weight:normal;font-style:normal;letter-spacing:0px;">Uid:91a12319-f98e-4ccf-ac4a-de577bfe9348</div>
<div class="a" style="left:737.5px;top:121.5px;width:273px;height:96px;background:#f9f9f9;border-radius:4px;border:1px solid #dbe5f0;border-right:2px solid #b8c6dc;border-bottom:2px solid #b8c6dc"></div>
<div class="t" style="left:746.7px;top:133.30px;font-size:10.6px;color:#222;font-weight:bold;font-style:normal;letter-spacing:0px;">Administrative Organization Unit</div>
<svg class="a" style="left:992.5px;top:130.5px" width="9" height="9" viewBox="0 0 9 9"><path d="M3.3 1.9 Q1.6 2.3 1.6 3.5 V7.6 H7.2 V6" stroke="#111" stroke-width="1.15" fill="none" stroke-linecap="round"/><path d="M3.9 5.6 L7.2 2.2" stroke="#111" stroke-width="1"/><circle cx="7.4" cy="1.9" r="1.15" fill="#111"/></svg>
<div class="a" style="left:746px;top:147.4px;width:256px;height:1px;background:#e6e6e6;"></div>
<div class="t" style="left:746.7px;top:151.50px;font-size:6.7px;color:#2c4c98;font-weight:bold;font-style:italic;letter-spacing:0px;-webkit-text-stroke:0.15px #2c4c98">Business Asset (Business Terms) Administrative Organization Unit</div>
<div class="a" style="left:746.7px;top:162.6px;width:22.2px;height:8.2px;background:#6b6b6b;border-radius:2.5px;color:#fff;font-size:6.3px;font-weight:bold;line-height:8.2px;text-align:center">Draft</div>
<div class="a" style="left:775.1px;top:162.6px;width:55.7px;height:8.2px;background:#e8842a;border-radius:2.5px;color:#fff;font-size:6.3px;font-weight:bold;line-height:8.2px;text-align:center;letter-spacing:-0.1px">Governance 80%</div>
<div class="t" style="left:746.7px;top:173.50px;font-size:6.8px;color:#555;font-weight:normal;font-style:normal;letter-spacing:-0.05px;"><b style="color:#333">Name:</b> Administrative Organization Unit <b style="color:#333">Status:</b> Under Review <b style="color:#333">Sensitivity Level:</b></div>
<div class="t" style="left:746.7px;top:183.90px;font-size:6.8px;color:#555;font-weight:normal;font-style:normal;letter-spacing:-0.05px;">Public <b style="color:#333">Reviewscore:</b> 2 <b style="color:#333">Rating:</b> <span style="color:#f0a030;font-size:6.8px">★★</span><span style="color:#f5d9a8;font-size:6.8px">★★★</span></div>
<div class="t" style="right:23.399999999999977px;top:197.20px;font-size:6.6px;color:#888;font-weight:normal;font-style:normal;letter-spacing:0px;">Uid:3547c630-6609-40d1-aa53-11b994ea13f8</div>
<div class="a" style="left:737.5px;top:224px;width:273px;height:85.5px;background:#f9f9f9;border-radius:4px;border:1px solid #dbe5f0;border-right:2px solid #b8c6dc;border-bottom:2px solid #b8c6dc"></div>
<div class="t" style="left:746.7px;top:235.80px;font-size:10.6px;color:#222;font-weight:bold;font-style:normal;letter-spacing:0px;">Quote</div>
<svg class="a" style="left:992.5px;top:233px" width="9" height="9" viewBox="0 0 9 9"><path d="M3.3 1.9 Q1.6 2.3 1.6 3.5 V7.6 H7.2 V6" stroke="#111" stroke-width="1.15" fill="none" stroke-linecap="round"/><path d="M3.9 5.6 L7.2 2.2" stroke="#111" stroke-width="1"/><circle cx="7.4" cy="1.9" r="1.15" fill="#111"/></svg>
<div class="a" style="left:746px;top:249.9px;width:256px;height:1px;background:#e6e6e6;"></div>
<div class="t" style="left:746.7px;top:254.00px;font-size:6.7px;color:#2c4c98;font-weight:bold;font-style:italic;letter-spacing:0px;-webkit-text-stroke:0.15px #2c4c98">Business Asset (Business Terms) Quote</div>
<div class="a" style="left:746.7px;top:265.1px;width:22.2px;height:8.2px;background:#6b6b6b;border-radius:2.5px;color:#fff;font-size:6.3px;font-weight:bold;line-height:8.2px;text-align:center">Draft</div>
<div class="a" style="left:775.1px;top:265.1px;width:55.7px;height:8.2px;background:#c3111d;border-radius:2.5px;color:#fff;font-size:6.3px;font-weight:bold;line-height:8.2px;text-align:center;letter-spacing:-0.1px">Governance 50%</div>
<div class="t" style="left:746.7px;top:276.00px;font-size:6.8px;color:#555;font-weight:normal;font-style:normal;letter-spacing:-0.05px;"><b style="color:#333">Name:</b> Quote <b style="color:#333">Status:</b> Draft <b style="color:#333">Sensitivity Level:</b> Public</div>
<div class="t" style="right:119.60000000000002px;top:289.30px;font-size:6.6px;color:#888;font-weight:normal;font-style:normal;letter-spacing:0px;">Uid:07c6d752-9a78-442f-b3b6-8925d4285447</div>
<div class="a" style="left:737.5px;top:316px;width:273px;height:85.5px;background:#f9f9f9;border-radius:4px;border:1px solid #dbe5f0;border-right:2px solid #b8c6dc;border-bottom:2px solid #b8c6dc"></div>
<div class="t" style="left:746.7px;top:327.80px;font-size:10.6px;color:#222;font-weight:bold;font-style:normal;letter-spacing:0px;">Task</div>
<svg class="a" style="left:992.5px;top:325px" width="9" height="9" viewBox="0 0 9 9"><path d="M3.3 1.9 Q1.6 2.3 1.6 3.5 V7.6 H7.2 V6" stroke="#111" stroke-width="1.15" fill="none" stroke-linecap="round"/><path d="M3.9 5.6 L7.2 2.2" stroke="#111" stroke-width="1"/><circle cx="7.4" cy="1.9" r="1.15" fill="#111"/></svg>
<div class="a" style="left:746px;top:341.9px;width:256px;height:1px;background:#e6e6e6;"></div>
<div class="t" style="left:746.7px;top:346.00px;font-size:6.7px;color:#2c4c98;font-weight:bold;font-style:italic;letter-spacing:0px;-webkit-text-stroke:0.15px #2c4c98">Business Asset (Business Terms) Task</div>
<div class="a" style="left:746.7px;top:357.1px;width:22.2px;height:8.2px;background:#6b6b6b;border-radius:2.5px;color:#fff;font-size:6.3px;font-weight:bold;line-height:8.2px;text-align:center">Draft</div>
<div class="a" style="left:775.1px;top:357.1px;width:55.7px;height:8.2px;background:#c3111d;border-radius:2.5px;color:#fff;font-size:6.3px;font-weight:bold;line-height:8.2px;text-align:center;letter-spacing:-0.1px">Governance 50%</div>
<div class="t" style="left:746.7px;top:368.00px;font-size:6.8px;color:#555;font-weight:normal;font-style:normal;letter-spacing:-0.05px;"><b style="color:#333">Name:</b> Task <b style="color:#333">Status:</b> Draft <b style="color:#333">Sensitivity Level:</b> Public</div>
<div class="t" style="right:126.10000000000002px;top:381.30px;font-size:6.6px;color:#888;font-weight:normal;font-style:normal;letter-spacing:0px;">Uid:4c07f9ca-9fcb-4ef0-9a06-39f7d557d944</div>
<div class="a" style="left:737.5px;top:407.5px;width:273px;height:85.5px;background:#f9f9f9;border-radius:4px;border:1px solid #dbe5f0;border-right:2px solid #b8c6dc;border-bottom:2px solid #b8c6dc"></div>
<div class="t" style="left:746.7px;top:419.30px;font-size:10.6px;color:#222;font-weight:bold;font-style:normal;letter-spacing:0px;">Department</div>
<svg class="a" style="left:992.5px;top:416.5px" width="9" height="9" viewBox="0 0 9 9"><path d="M3.3 1.9 Q1.6 2.3 1.6 3.5 V7.6 H7.2 V6" stroke="#111" stroke-width="1.15" fill="none" stroke-linecap="round"/><path d="M3.9 5.6 L7.2 2.2" stroke="#111" stroke-width="1"/><circle cx="7.4" cy="1.9" r="1.15" fill="#111"/></svg>
<div class="a" style="left:746px;top:433.4px;width:256px;height:1px;background:#e6e6e6;"></div>
<div class="t" style="left:746.7px;top:437.50px;font-size:6.7px;color:#2c4c98;font-weight:bold;font-style:italic;letter-spacing:0px;-webkit-text-stroke:0.15px #2c4c98">Business Asset (Business Terms) Department</div>
<div class="a" style="left:746.7px;top:448.6px;width:22.2px;height:8.2px;background:#6b6b6b;border-radius:2.5px;color:#fff;font-size:6.3px;font-weight:bold;line-height:8.2px;text-align:center">Draft</div>
<div class="a" style="left:775.1px;top:448.6px;width:55.7px;height:8.2px;background:#c3111d;border-radius:2.5px;color:#fff;font-size:6.3px;font-weight:bold;line-height:8.2px;text-align:center;letter-spacing:-0.1px">Governance 50%</div>
<div class="t" style="left:746.7px;top:459.50px;font-size:6.8px;color:#555;font-weight:normal;font-style:normal;letter-spacing:-0.05px;"><b style="color:#333">Name:</b> Department <b style="color:#333">Status:</b> Draft <b style="color:#333">Sensitivity Level:</b> Public</div>
<div class="t" style="right:101.5px;top:472.80px;font-size:6.6px;color:#888;font-weight:normal;font-style:normal;letter-spacing:0px;">Uid:e88a4bb3-1adb-4616-bec9-2b789bf1ac9a</div>
</body></html>
